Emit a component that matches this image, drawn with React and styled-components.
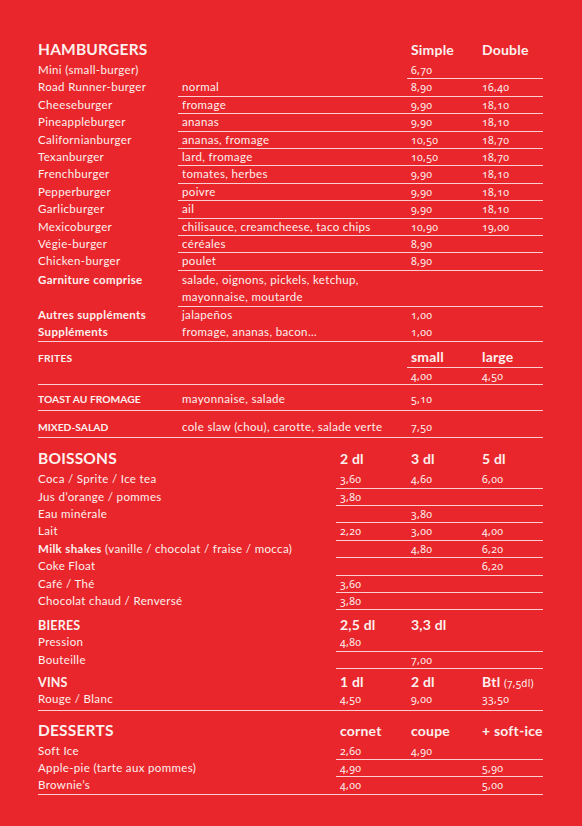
import React from "react";
import styled, { createGlobalStyle } from "styled-components";

const RED = "#e8262b";
const INK = "#fdf0ee";
const RULE = "rgba(255, 236, 236, 0.85)";
const GRID = "140px 158px 71px 71px 65px";

const GlobalStyle = createGlobalStyle`
	body {
		margin: 0;
		background: ${RED};
	}
`;

const Page = styled.div`
	width: 505px;
	padding: 37px 39px 30px 38px;
	font-family: "Lato", "Open Sans", sans-serif;
	color: ${INK};
	background: ${RED};
`;

const Row = styled.div`
	display: grid;
	grid-template-columns: ${GRID};
	align-items: ${(p) => (p.$head ? "baseline" : "stretch")};
	margin-top: ${(p) => p.$mt || 0}px;
`;

const Cell = styled.div`
	grid-column: ${(p) => p.$col} / span ${(p) => p.$span || 1};
	padding: ${(p) => p.$pt || 0}px 0 ${(p) => p.$pb || 0}px ${(p) => (p.$col === 1 ? 0 : 4)}px;
	font-size: ${(p) => p.$size || 11.5}px;
	font-weight: ${(p) => (p.$bold ? 700 : 400)};
	letter-spacing: ${(p) => (p.$caps ? 0 : 0.35)}px;
	line-height: ${(p) => p.$lh || 16.4}px;
	white-space: nowrap;
	border-bottom: 1px solid ${(p) => (p.$ruled ? RULE : "transparent")};
`;

const Price = styled(Cell)`
	font-family: "Noto Sans", "Lato", sans-serif;
	font-size: 10.5px;
	letter-spacing: 0.3px;
	font-variant-numeric: oldstyle-nums;
	font-feature-settings: "onum" 1;
`;

const Title = styled(Cell)`
	font-size: ${(p) => p.$size || 15.5}px;
	font-weight: 700;
	letter-spacing: 0.2px;
	line-height: ${(p) => p.$lh || 24}px;
	border: none;
`;

const Label = styled(Cell)`
	font-size: 14px;
	font-weight: 700;
	letter-spacing: 0.2px;
	line-height: ${(p) => p.$lh || 24}px;
	border: none;
`;

const Small = styled.span`
	font-family: "Noto Sans", "Lato", sans-serif;
	font-weight: 400;
	font-size: 10px;
	font-variant-numeric: oldstyle-nums;
`;

// rule: column index from which the bottom line starts (1 = full width)
const BurgerRow = ({ name, desc, prices = [], rule, bold, caps, lh, pt, pb }) => {
	const pad = { $pt: pt, $pb: pb, $lh: lh };
	return (
		<Row>
			<Cell $col={1} $bold={bold || caps} $caps={caps} $size={caps ? 10.3 : undefined} $ruled={rule === 1} {...pad}>
				{name}
			</Cell>
			<Cell $col={2} $span={2} $ruled={rule && rule <= 2} {...pad}>{desc}</Cell>
			<Price $col={4} $ruled={rule && rule <= 4} {...pad}>{prices[0]}</Price>
			<Price $col={5} $ruled={rule && rule <= 5} {...pad}>{prices[1]}</Price>
		</Row>
	);
};

const DrinkRow = ({ name, prices = [], rule, pb }) => (
	<Row>
		<Cell $col={1} $span={2} $ruled={rule === 1} $pb={pb}>{name}</Cell>
		{[0, 1, 2].map((i) => (
			<Price key={i} $col={3 + i} $ruled={rule && rule <= 3 + i} $pb={pb}>
				{prices[i]}
			</Price>
		))}
	</Row>
);

const DrinkHead = ({ title, labels, size, lh, mt }) => (
	<Row $head $mt={mt}>
		<Title $col={1} $span={2} $size={size} $lh={lh}>{title}</Title>
		{labels.map((l, i) => (
			<Label key={i} $col={3 + i} $lh={lh}>{l}</Label>
		))}
	</Row>
);

const burgers = [
	["Road Runner-burger", "normal", "8,90", "16,40"],
	["Cheeseburger", "fromage", "9,90", "18,10"],
	["Pineappleburger", "ananas", "9,90", "18,10"],
	["Californianburger", "ananas, fromage", "10,50", "18,70"],
	["Texanburger", "lard, fromage", "10,50", "18,70"],
	["Frenchburger", "tomates, herbes", "9,90", "18,10"],
	["Pepperburger", "poivre", "9,90", "18,10"],
	["Garlicburger", "ail", "9,90", "18,10"],
	["Mexicoburger", "chilisauce, creamcheese, taco chips", "10,90", "19,00"],
	["Végie-burger", "céréales", "8,90", ""],
	["Chicken-burger", "poulet", "8,90", ""],
];

const drinks = [
	["Coca / Sprite / Ice tea", ["3,60", "4,60", "6,00"]],
	["Jus d’orange / pommes", ["3,80"]],
	["Eau minérale", ["", "3,80"]],
	["Lait", ["2,20", "3,00", "4,00"]],
	[<><b>Milk shakes</b> (vanille / chocolat / fraise / mocca)</>, ["", "4,80", "6,20"]],
	["Coke Float", ["", "", "6,20"]],
	["Café / Thé", ["3,60"]],
	["Chocolat chaud / Renversé", ["3,80"]],
];

const desserts = [
	["Soft Ice", ["2,60", "4,90"], 3],
	["Apple-pie (tarte aux pommes)", ["4,90", "", "5,90"], 3],
	["Brownie’s", ["4,00", "", "5,00"], 1],
];

const App = () => (
	<Page>
		<GlobalStyle />

		<Row $head>
			<Title $col={1} $span={3}>HAMBURGERS</Title>
			<Label $col={4}>Simple</Label>
			<Label $col={5}>Double</Label>
		</Row>
		<BurgerRow name="Mini (small-burger)" prices={["6,70"]} rule={4} />
		{burgers.map(([n, d, s, db]) => (
			<BurgerRow key={n} name={n} desc={d} prices={[s, db]} rule={2} />
		))}
		<BurgerRow
			name="Garniture comprise"
			bold
			lh={17.4}
			desc={<>salade, oignons, pickels, ketchup,<br />mayonnaise, moutarde</>}
			rule={2}
		/>
		<BurgerRow name="Autres suppléments" bold desc="jalapeños" prices={["1,00"]} />
		<BurgerRow name="Suppléments" bold desc="fromage, ananas, bacon…" prices={["1,00"]} rule={1} />

		<Row $head $mt={6}>
			<Title $col={1} $span={3} $size={10.3} $lh={17.4}>FRITES</Title>
			<Label $col={4} $lh={17.4}>small</Label>
			<Label $col={5} $lh={17.4}>large</Label>
		</Row>
		<Row>
			<Cell $col={1} $span={3} />
			<Cell $col={4} $ruled />
			<Cell $col={5} $ruled />
		</Row>
		<BurgerRow prices={["4,00", "4,50"]} rule={1} />
		<BurgerRow name="TOAST AU FROMAGE" caps desc="mayonnaise, salade" prices={["5,10"]} rule={1} pt={6} pb={2} />
		<BurgerRow name="MIXED-SALAD" caps desc="cole slaw (chou), carotte, salade verte" prices={["7,50"]} rule={1} pt={8} pb={2} />

		<DrinkHead title="BOISSONS" labels={["2 dl", "3 dl", "5 dl"]} mt={8} />
		{drinks.map(([n, p], i) => (
			<DrinkRow key={i} name={n} prices={p} rule={3} />
		))}

		<DrinkHead title="BIERES" size={12.5} lh={16} mt={7} labels={["2,5 dl", "3,3 dl"]} />
		<DrinkRow name="Pression" prices={["4,80"]} rule={3} />
		<DrinkRow name="Bouteille" prices={["", "7,00"]} rule={3} />

		<DrinkHead title="VINS" size={12.5} lh={16} mt={5} labels={["1 dl", "2 dl", <>Btl <Small>(7,5dl)</Small></>]} />
		<DrinkRow name="Rouge / Blanc" prices={["4,50", "9,00", "33,50"]} rule={1} pb={2} />

		<DrinkHead title="DESSERTS" labels={["cornet", "coupe", "+ soft-ice"]} mt={7} />
		{desserts.map(([n, p, r]) => (
			<DrinkRow key={n} name={n} prices={p} rule={r} />
		))}
	</Page>
);

export default App;
